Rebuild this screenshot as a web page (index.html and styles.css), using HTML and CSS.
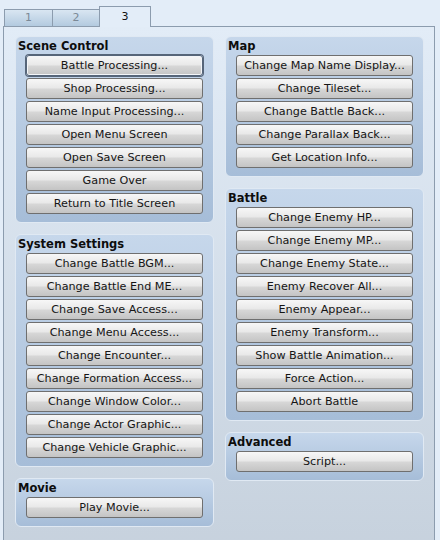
FILE: index.html
```html
<!DOCTYPE html>
<html lang="en">
<head>
    <meta charset="UTF-8">
    <title>Event Commands</title>
    <link rel="stylesheet" href="styles.css">
</head>
<body>
    <div class="tabs">
        <div class="tab">1</div>
        <div class="tab">2</div>
        <div class="tab active">3</div>
    </div>

    <div class="panel">
        <div class="column">
            <div class="group">
                <div class="group-title">Scene Control</div>
                <div class="buttons">
                    <button class="btn default">Battle Processing...</button>
                    <button class="btn">Shop Processing...</button>
                    <button class="btn">Name Input Processing...</button>
                    <button class="btn">Open Menu Screen</button>
                    <button class="btn">Open Save Screen</button>
                    <button class="btn">Game Over</button>
                    <button class="btn">Return to Title Screen</button>
                </div>
            </div>

            <div class="group">
                <div class="group-title">System Settings</div>
                <div class="buttons">
                    <button class="btn">Change Battle BGM...</button>
                    <button class="btn">Change Battle End ME...</button>
                    <button class="btn">Change Save Access...</button>
                    <button class="btn">Change Menu Access...</button>
                    <button class="btn">Change Encounter...</button>
                    <button class="btn">Change Formation Access...</button>
                    <button class="btn">Change Window Color...</button>
                    <button class="btn">Change Actor Graphic...</button>
                    <button class="btn">Change Vehicle Graphic...</button>
                </div>
            </div>

            <div class="group">
                <div class="group-title">Movie</div>
                <div class="buttons">
                    <button class="btn">Play Movie...</button>
                </div>
            </div>
        </div>

        <div class="column">
            <div class="group">
                <div class="group-title">Map</div>
                <div class="buttons">
                    <button class="btn">Change Map Name Display...</button>
                    <button class="btn">Change Tileset...</button>
                    <button class="btn">Change Battle Back...</button>
                    <button class="btn">Change Parallax Back...</button>
                    <button class="btn">Get Location Info...</button>
                </div>
            </div>

            <div class="group">
                <div class="group-title">Battle</div>
                <div class="buttons">
                    <button class="btn">Change Enemy HP...</button>
                    <button class="btn">Change Enemy MP...</button>
                    <button class="btn">Change Enemy State...</button>
                    <button class="btn">Enemy Recover All...</button>
                    <button class="btn">Enemy Appear...</button>
                    <button class="btn">Enemy Transform...</button>
                    <button class="btn">Show Battle Animation...</button>
                    <button class="btn">Force Action...</button>
                    <button class="btn">Abort Battle</button>
                </div>
            </div>

            <div class="group">
                <div class="group-title">Advanced</div>
                <div class="buttons">
                    <button class="btn">Script...</button>
                </div>
            </div>
        </div>
    </div>
</body>
</html>
```

FILE: styles.css
```css
* {
    margin: 0;
    padding: 0;
    box-sizing: border-box;
    font-family: "DejaVu Sans", Verdana, sans-serif;
}

body {
    background-color: #e3edf8;
    overflow: hidden;
}

/* Tabs */
.tabs {
    display: flex;
    align-items: flex-end;
    height: 26px;
    padding: 6px 0 0 4px;
}

.tab {
    width: 49px;
    height: 17px;
    border: 1px solid #8c9cae;
    border-bottom: none;
    background: linear-gradient(#d9e6f2, #b3cadf);
    color: #7b8997;
    font-size: 11px;
    line-height: 16px;
    text-align: center;
}

.tab + .tab {
    margin-left: -1px;
    width: 48px;
}

.tab.active {
    position: relative;
    z-index: 1;
    width: 52px;
    height: 21px;
    margin-bottom: -1px;
    background: #e3edf8;
    color: #111;
    line-height: 19px;
}

/* Panel */
.panel {
    display: grid;
    grid-template-columns: 199px 199px;
    column-gap: 11px;
    align-items: start;
    width: 432px;
    height: 530px;
    margin-left: 3px;
    padding: 9px 10px 0 11px;
    border: 1px solid #8c9cae;
    border-bottom: none;
    background: linear-gradient(#e2ecf7, #c6d1dd);
}

.column {
    display: flex;
    flex-direction: column;
    gap: 11px;
}

.group {
    padding: 2px 0 8px;
    border: 1px solid #e0e9f3;
    border-radius: 6px;
    background: linear-gradient(#c6d7eb, #a6bdd8);
}

.group-title {
    height: 15px;
    margin-bottom: 1px;
    padding-left: 2px;
    font-size: 11.5px;
    font-weight: bold;
    line-height: 15px;
    color: #0d0d0d;
}

.buttons {
    display: flex;
    flex-direction: column;
    gap: 2px;
    margin: 0 10px;
}

.btn {
    display: block;
    width: 100%;
    height: 21px;
    border: 1px solid #6f6f6f;
    border-radius: 3px;
    background: linear-gradient(#f7f7f7, #e9e9e9 45%, #d6d6d6 55%, #c4c4c4);
    color: #151515;
    font-size: 11.2px;
    line-height: 19px;
    text-align: center;
    cursor: pointer;
}

.btn.default {
    border-color: #566579;
    box-shadow: 0 0 0 1px #566579, inset 0 0 0 1px #f3f5f8;
}
```
